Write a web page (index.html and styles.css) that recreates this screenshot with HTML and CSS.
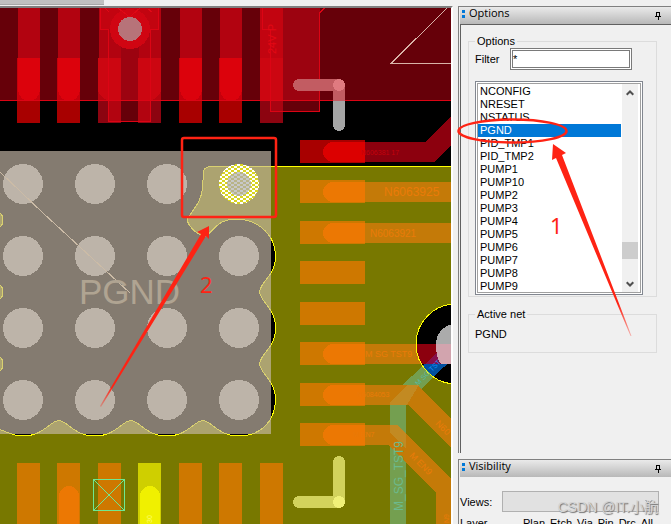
FILE: index.html
```
<!DOCTYPE html>
<html lang="en">

<head>
  <meta charset="UTF-8">
  <meta name="viewport" content="width=device-width, initial-scale=1.0">
  <title>PCB Editor</title>
  <link rel="stylesheet" href="styles.css">
</head>

<body>
  <div class="toolbar">
    <div class="toolbar-thumb"></div>
  </div>
  <div class="workspace">
    <main class="canvas">
      <svg class="board" viewBox="0 8 451 516" preserveAspectRatio="xMinYMin slice" shape-rendering="crispEdges">
        <defs>
          <pattern id="checker" width="6" height="4" patternUnits="userSpaceOnUse">
            <rect width="6" height="4" fill="#fff" />
            <path d="M0 0h3v2h3v2H3V2H0z" fill="#d8d420" />
          </pattern>
          <pattern id="checkerGrey" width="6" height="4" patternUnits="userSpaceOnUse">
            <rect width="6" height="4" fill="#c8c8c8" />
            <path d="M0 0h3v2h3v2H3V2H0z" fill="#b8b488" />
          </pattern>
          <clipPath id="void">
            <circle cx="456" cy="344" r="40" />
          </clipPath>
        </defs>
        <rect y="8" width="451" height="516" fill="#000" />

        <!-- top copper -->
        <rect y="8" width="451" height="93" fill="#660009" />
        <g fill="#a80000">
          <path d="M17 100h23v23H17zM57 100h23v23H57zM179 100h23v23h-23zM219 100h23v23h-23z" />
          <path d="M98 100h23v23H98zM138 100h23v23h-23zM260 100h23v23h-23z" fill="#8c0410" />
        </g>
        <path d="M18 8h22v50H18zM58 8h22v50H58zM99 8h22v50H99zM139 8h22v50h-22zM180 8h22v50h-22zM220 8h22v50h-22z" fill="#b20310" />
        <path d="M17 58h23v42H17zM57 58h23v42H57zM179 58h23v42h-23zM219 58h23v42h-23z" fill="#c6000b" />
        <path d="M18 58h22v33q-3 10-11 10t-11-10zM58 58h22v33q-3 10-11 10t-11-10zM180 58h22v33q-3 10-11 10t-11-10zM220 58h22v33q-3 10-11 10t-11-10z" fill="#dc020c" />
        <path d="M121 30h18v70h-18z" fill="#9c0310" />
        <path d="M100 8h58v21h-58z" fill="#c20410" />
        <path d="M98 58h23v42H98zM138 58h23v42h-23z" fill="#b8040f" />
        <path d="M98 58h23v42h-14q-6-2-9-9zM138 58h23v33q-3 7-9 9h-14z" fill="#cc0611" />
        <path d="M108 101h13v20h-13zM138 101h13v20h-13z" fill="#b20410" />
        <path d="M121 101h17v20h-17z" fill="#660009" />
        <path d="M100.500 8v21.500h8v92h42v-92h8V8" fill="none" stroke="#dc0414" />
        <circle cx="130" cy="29" r="20" fill="#d00512" />
        <path d="M118 8l18 14M140 8l-16 14M105 8l4 4M148 9l4 3" stroke="#e00815" fill="none" />
        <circle cx="130" cy="29" r="12" fill="#b77379" />
        <path d="M283 8h37v92h-37z" fill="#9c0310" />
        <path d="M270 101h50v10h-50z" fill="#660009" />
        <path d="M260 8h23v50h-23z" fill="#c20410" />
        <path d="M260 58h23v42h-23z" fill="#cc0611" />
        <path d="M270 101h13v10h-13z" fill="#a80411" />
        <path d="M262.500 8v21.500h8v82h49V13l5-5" fill="none" stroke="#dc0414" />
        <path d="M0 100.500h451" stroke="#dc0414" />
        <text class="net" transform="translate(276 54) rotate(-90)" font-size="11" fill="#e20814">24V P</text>
        <path d="M447 8l-56 55.500h60" fill="none" stroke="#d9b3a8" />
        <path d="M299 85h40" stroke="#c25c62" stroke-width="12" stroke-linecap="round" />
        <path d="M333 85h12v16h-12z" fill="#c25c62" />
        <path d="M333 101h12v24a6 6 0 0 1-12 0z" fill="#a5a5a5" />
        <circle cx="339" cy="85" r="6" fill="#e07a80" />

        <!-- red net -->
        <path d="M300 140h65v23h-65z" fill="#a80000" />
        <path d="M365 152h65l30-30" fill="none" stroke="#8c000e" stroke-width="20" />
        <path d="M365 142h-32a10 10 0 0 0 0 20h32z" fill="#dc0000" />
        <text class="net" x="361" y="155" font-size="7" fill="#c4000c">N606381 17</text>

        <!-- ground pour -->
        <path d="M460 166.500H211Q203 167 203 174V180C203 201 195 207 187 219C188 226 196 234 205 237C212 232 218 220 232 219.500C254 217 275 232 275.500 256C275.500 277 261 280 259.500 292C261 303 275.500 308 275.500 328C275.500 349 261 352 259.500 364C261 375 275.500 380 275.500 400C275 422 260 436 239 436C218 436 211 420.500 203 420.500C194 420.500 188 436 167 436C146 436 139 420.500 131 420.500C122 420.500 116 436 95 436C74 436 67 420.500 59 420.500C50 420.500 44 436 23 436C12 436 6 431 -2 429V530H460z" fill="#787800" stroke="#ffff00" />
        <g fill="#787800" stroke="#ffff00">
          <ellipse cx="-1" cy="220" rx="4" ry="7" />
          <ellipse cx="-1" cy="292" rx="4" ry="7" />
          <ellipse cx="-1" cy="364" rx="4" ry="7" />
        </g>
        <g fill="#ababab">
          <circle cx="23" cy="184" r="20" /><circle cx="95" cy="184" r="20" /><circle cx="167" cy="184" r="20" />
          <circle cx="23" cy="256" r="20" /><circle cx="95" cy="256" r="20" /><circle cx="167" cy="256" r="20" /><circle cx="239" cy="256" r="20" />
          <circle cx="23" cy="328" r="20" /><circle cx="95" cy="328" r="20" /><circle cx="167" cy="328" r="20" /><circle cx="239" cy="328" r="20" />
          <circle cx="23" cy="400" r="20" /><circle cx="95" cy="400" r="20" /><circle cx="167" cy="400" r="20" /><circle cx="239" cy="400" r="20" />
        </g>
        <rect y="151" width="271" height="283" fill="#c6b8a8" opacity=".667" />
        <path d="M0 172l43 41 87 80" fill="none" stroke="#cbbba6" />
        <text class="net" x="79" y="304" font-size="35" fill="#b0a492">PGND</text>
        <circle cx="239" cy="184" r="20" fill="url(#checker)" />
        <circle cx="239" cy="184" r="12" fill="url(#checkerGrey)" />

        <!-- right hand pads -->
        <path d="M300 180h65v23h-65zM300 221h65v23h-65zM300 261h65v23h-65zM300 302h65v23h-65zM300 342h65v23h-65zM300 383h65v23h-65zM300 423h65v23h-65z" fill="#ce7800" />
        <circle cx="456" cy="344" r="40" fill="#000" stroke="#ffff00" />
        <path d="M398 524V401l58-57" fill="none" stroke="#749f50" stroke-width="16" />
        <g fill="none" stroke="#c47a08" stroke-width="20">
          <path d="M365 192h86M365 233h86M365 354h86" />
          <path d="M365 395h48l47 47" />
          <path d="M365 435h28l53 53v36" />
        </g>
        <path d="M390 402l17-17h12l-12 20h-17zM390 425h7l9 8v16l-16-16z" fill="#c28a22" />
        <g clip-path="url(#void)">
          <circle cx="456" cy="344" r="39" fill="#000" />
          <path d="M398 401l58-57" stroke="#0050a0" stroke-width="16" />
          <path d="M415 344h36v20h-36z" fill="#8c000e" />
          <path d="M425 364l20-20h6v12l-8 8z" fill="#86104a" />
          <circle cx="456" cy="344" r="20" fill="#ababab" />
          <path d="M436 344h15v20h-10q-5-6-5-20z" fill="#d2a4ae" />
        </g>
        <circle cx="456" cy="344" r="40" fill="none" stroke="#ffff00" />
        <path d="M365 182h-32a10 10 0 0 0 0 20h32zM365 223h-32a10 10 0 0 0 0 20h32zM365 344h-32a10 10 0 0 0 0 20h32zM365 385h-32a10 10 0 0 0 0 20h32zM365 425h-32a10 10 0 0 0 0 20h32z" fill="#ec7803" />
        <g class="net" fill="#ea7a08">
          <text x="384" y="196" font-size="12">N6063925</text>
          <text x="370" y="237" font-size="10">N6063921</text>
          <text x="365" y="357" font-size="9">M SG TST9</text>
          <text x="357" y="397" font-size="7">N6084053</text>
          <text x="353" y="437" font-size="7">M EN7</text>
          <text transform="translate(435 424) rotate(45)" font-size="9">N60</text>
          <text transform="translate(409 456) rotate(45)" font-size="9">M EN9</text>
          <text transform="translate(449 523) rotate(-90)" font-size="7">N9</text>
        </g>
        <text class="net" transform="translate(403 511) rotate(-90)" font-size="12" fill="#6cba8c">M_SG_TST9</text>
        <text class="net" transform="translate(418 386) rotate(-45)" font-size="7" fill="#58b8a0">M SG <tspan fill="#1090ff">TST</tspan></text>

        <!-- bottom pads -->
        <path d="M17 463h23v61H17zM57 463h23v61H57zM98 463h23v61H98zM179 463h23v61h-23zM219 463h23v61h-23zM260 463h23v61h-23z" fill="#ce7800" />
        <path d="M59 524v-28a10 10 0 0 1 20 0v28z" fill="#ec7803" />
        <path d="M138 463h23v61h-23z" fill="#cfcf00" />
        <path d="M140 524v-28a10 10 0 0 1 20 0v28z" fill="#f0f000" />
        <text class="net" transform="translate(152 523) rotate(-90)" font-size="7" fill="#ffff70">30</text>
        <path d="M93.500 479.500h31v31h-31zl31 31m0-31l-31 31" fill="none" stroke="#70e890" />
        <path d="M299 502h40M339 462v40" stroke="#d2d25c" stroke-width="12" stroke-linecap="round" />
        <circle cx="339" cy="502" r="6" fill="#f0f078" />
      </svg>
    </main>

    <aside class="side">
      <section class="panel">
        <header class="panel-header">
          <span class="grip"></span>
          <h2>Options</h2>
          <button class="pin" aria-label="Pin Options">
            <svg width="7" height="8" viewBox="0 0 7 8" shape-rendering="crispEdges">
              <path d="M1.500 4V.5h3V4M4.500 0v4M0 4.500h6M3.500 4v4" fill="none" stroke="#000" />
            </svg>
          </button>
        </header>
        <div class="panel-body">
          <fieldset class="group">
            <legend>Options</legend>
            <div class="filter">
              <label for="filter">Filter</label>
              <input type="text" id="filter" value="*">
            </div>
            <div class="list">
              <select size="16" aria-label="Nets">
                <option>NCONFIG</option>
                <option>NRESET</option>
                <option>NSTATUS</option>
                <option selected>PGND</option>
                <option>PID_TMP1</option>
                <option>PID_TMP2</option>
                <option>PUMP1</option>
                <option>PUMP10</option>
                <option>PUMP2</option>
                <option>PUMP3</option>
                <option>PUMP4</option>
                <option>PUMP5</option>
                <option>PUMP6</option>
                <option>PUMP7</option>
                <option>PUMP8</option>
                <option>PUMP9</option>
              </select>
              <div class="scrollbar">
                <button aria-label="Scroll up">
                  <svg width="8" height="6" viewBox="0 0 8 6"><path d="M.7 4.800L4 1.500l3.300 3.300" fill="none" stroke="#505050" stroke-width="2" /></svg>
                </button>
                <div class="scrollbar-thumb"></div>
                <button aria-label="Scroll down">
                  <svg width="8" height="6" viewBox="0 0 8 6"><path d="M.7 1.200L4 4.500l3.300-3.300" fill="none" stroke="#505050" stroke-width="2" /></svg>
                </button>
              </div>
            </div>
          </fieldset>
          <fieldset class="group">
            <legend>Active net</legend>
            <p class="net-name">PGND</p>
          </fieldset>
        </div>
      </section>

      <section class="panel panel-visibility">
        <header class="panel-header">
          <span class="grip"></span>
          <h2>Visibility</h2>
          <button class="pin" aria-label="Pin Visibility">
            <svg width="7" height="8" viewBox="0 0 7 8" shape-rendering="crispEdges">
              <path d="M1.500 4V.5h3V4M4.500 0v4M0 4.500h6M3.500 4v4" fill="none" stroke="#000" />
            </svg>
          </button>
        </header>
        <div class="views">
          <label for="views">Views:</label>
          <select id="views">
            <option></option>
          </select>
          <svg class="views-arrow" width="8" height="6" viewBox="0 0 8 6"><path d="M.7 1.200L4 4.500l3.300-3.300" fill="none" stroke="#707070" /></svg>
        </div>
        <table class="layers">
          <tr>
            <th class="layer-name">Layer</th>
            <th>Plan</th>
            <th>Etch</th>
            <th>Via</th>
            <th>Pin</th>
            <th>Drc</th>
            <th>All</th>
          </tr>
        </table>
      </section>
    </aside>
  </div>

  <!-- callouts drawn over the whole window -->
  <svg class="notes" width="671" height="524" viewBox="0 0 671 524">
    <defs>
      <linearGradient id="fade1" gradientUnits="userSpaceOnUse" x1="631" y1="336" x2="618" y2="304">
        <stop offset="0" stop-color="#fe2314" stop-opacity=".3" />
        <stop offset="1" stop-color="#fe2314" />
      </linearGradient>
      <linearGradient id="fade2" gradientUnits="userSpaceOnUse" x1="101" y1="406" x2="113" y2="386">
        <stop offset="0" stop-color="#fe2314" stop-opacity=".3" />
        <stop offset="1" stop-color="#fe2314" />
      </linearGradient>
    </defs>
    <rect x="182" y="138" width="94" height="79" rx="2" fill="none" stroke="#fe2314" stroke-width="2.500" />
    <ellipse cx="512.500" cy="131" rx="54" ry="11.500" fill="none" stroke="#fe2314" stroke-width="2.500" />
    <path d="M631.500 336L562 155l4-2-13-9-1 16 4-2 74.500 178z" fill="url(#fade1)" />
    <path d="M101 407L206 236l3 3v-13l-12 6 4 2L100 406z" fill="url(#fade2)" />
    <text x="550" y="234" class="note-text">1</text>
    <text x="200" y="293" class="note-text">2</text>
  </svg>
  <div class="watermark">CSDN @IT.小航</div>
</body>

</html>
```
FILE: styles.css
```
* {
  box-sizing: border-box;
  margin: 0;
  padding: 0;
}

body {
  font-family: "Liberation Sans", Arial, sans-serif;
  font-size: 11px;
  line-height: 14px;
  color: #000;
  background: #f0f0f0;
  display: flex;
  flex-direction: column;
  height: 100vh;
  position: relative;
  overflow: hidden;
}

.toolbar {
  height: 6px;
  flex: none;
}

.toolbar-thumb {
  width: 104px;
  height: 5px;
  background: #c0c0c0;
  border-bottom: 1px solid #a8a8a8;
}

.workspace {
  display: flex;
  flex: 1;
  min-height: 0;
}

.canvas {
  flex: 1;
  min-width: 0;
  border-top: 2px solid #808080;
  border-right: 2px solid #fff;
  background: #000;
}

.board {
  display: block;
  width: 100%;
  height: 100%;
}

.net {
  font-family: "Liberation Sans", Arial, sans-serif;
}

.side {
  width: 218px;
  flex: none;
  padding-left: 5px;
  display: flex;
  flex-direction: column;
  gap: 6px;
}

.panel {
  border-left: 1px solid #808080;
  border-top: 1px solid #808080;
  padding-left: 1px;
  flex: none;
}

.panel-header {
  display: flex;
  align-items: center;
  height: 17px;
  padding: 0 9px 0 2px;
  background: linear-gradient(#eaeaea, #b8b8b8);
}

.panel-header h2 {
  flex: 1;
  font-family: "Open Sans", sans-serif;
  font-size: 11px;
  font-weight: normal;
  line-height: 14px;
  margin-left: 4px;
  margin-bottom: 6px;
}

.grip {
  width: 3px;
  height: 8px;
  margin-bottom: 3px;
  border-top: 3px solid #0078d7;
  border-bottom: 3px solid #0078d7;
}

.pin {
  display: flex;
  border: none;
  background: none;
}

.panel-body {
  height: 429px;
  border-left: 1px solid #606060;
  border-top: 1px solid #606060;
  padding: 9px 14px 0 7px;
}

.group {
  min-width: 0;
  border: 1px solid #dcdcdc;
  padding: 0 13px 1px 6px;
  margin-bottom: 10px;
}

.group legend {
  padding: 0 2px;
}

.filter {
  display: flex;
  align-items: center;
  padding-right: 11px;
  margin-bottom: 11px;
}

.filter label {
  width: 35px;
}

.filter input {
  flex: 1;
  min-width: 0;
  height: 22px;
  padding: 0 2px;
  font: inherit;
  border: 1px solid #7a7a7a;
  outline: 1px solid #7a7a7a;
  outline-offset: -3px;
  background: #fff;
}

.list {
  display: flex;
  height: 214px;
  padding: 1px;
  border: 1px solid #828790;
  outline: 1px solid #a0a0a0;
  outline-offset: -3px;
  background: #fff;
}

.list select {
  flex: 1;
  min-width: 0;
  height: 210px;
  padding: 2px 1px 0;
  font: inherit;
  color: #000;
  border: none;
  border-radius: 0;
  outline: none;
  overflow: hidden;
  background: transparent;
}

.list option {
  height: 13px;
  min-height: 13px;
  line-height: 13px;
  padding: 0 2px;
}

.list option:checked {
  background: #0078d7 linear-gradient(#0078d7, #0078d7);
  -webkit-text-fill-color: #fff;
}

.scrollbar {
  width: 16px;
  margin: 1px 3px 1px 0;
  display: flex;
  flex-direction: column;
  background: #f0f0f0;
}

.scrollbar button {
  height: 17px;
  display: flex;
  align-items: center;
  justify-content: center;
  border: none;
  background: none;
}

.scrollbar-thumb {
  height: 17px;
  margin-top: auto;
  margin-bottom: 16px;
  background: #cdcdcd;
}

.net-name {
  padding: 6px 0 10px;
}

.panel-visibility {
  flex: 1;
  min-height: 0;
}

.views {
  display: flex;
  align-items: center;
  margin: 14px 12px 4px 0;
}

.views label {
  width: 42px;
}

.views select {
  flex: 1;
  height: 21px;
  appearance: none;
  border: 1px solid #b0b0b0;
  border-radius: 0;
  background: #e1e1e1;
}

.views-arrow {
  margin-left: -14px;
  margin-right: 6px;
}

.layers {
  border-collapse: collapse;
}

.layers th {
  font-weight: normal;
  text-align: left;
  padding-right: 5px;
}

.layers .layer-name {
  width: 63px;
}

.notes {
  position: absolute;
  top: 0;
  left: 0;
  pointer-events: none;
}

.note-text {
  font-family: "Noto Sans", sans-serif;
  font-size: 22px;
  fill: #fe2314;
}

.watermark {
  position: absolute;
  right: 13px;
  bottom: 7px;
  font-family: "Liberation Sans", "Noto Sans CJK SC", sans-serif;
  font-size: 14px;
  line-height: 20px;
  color: #d4d4d4;
  text-shadow: 1px 1px 1px #707070;
  pointer-events: none;
}
```
